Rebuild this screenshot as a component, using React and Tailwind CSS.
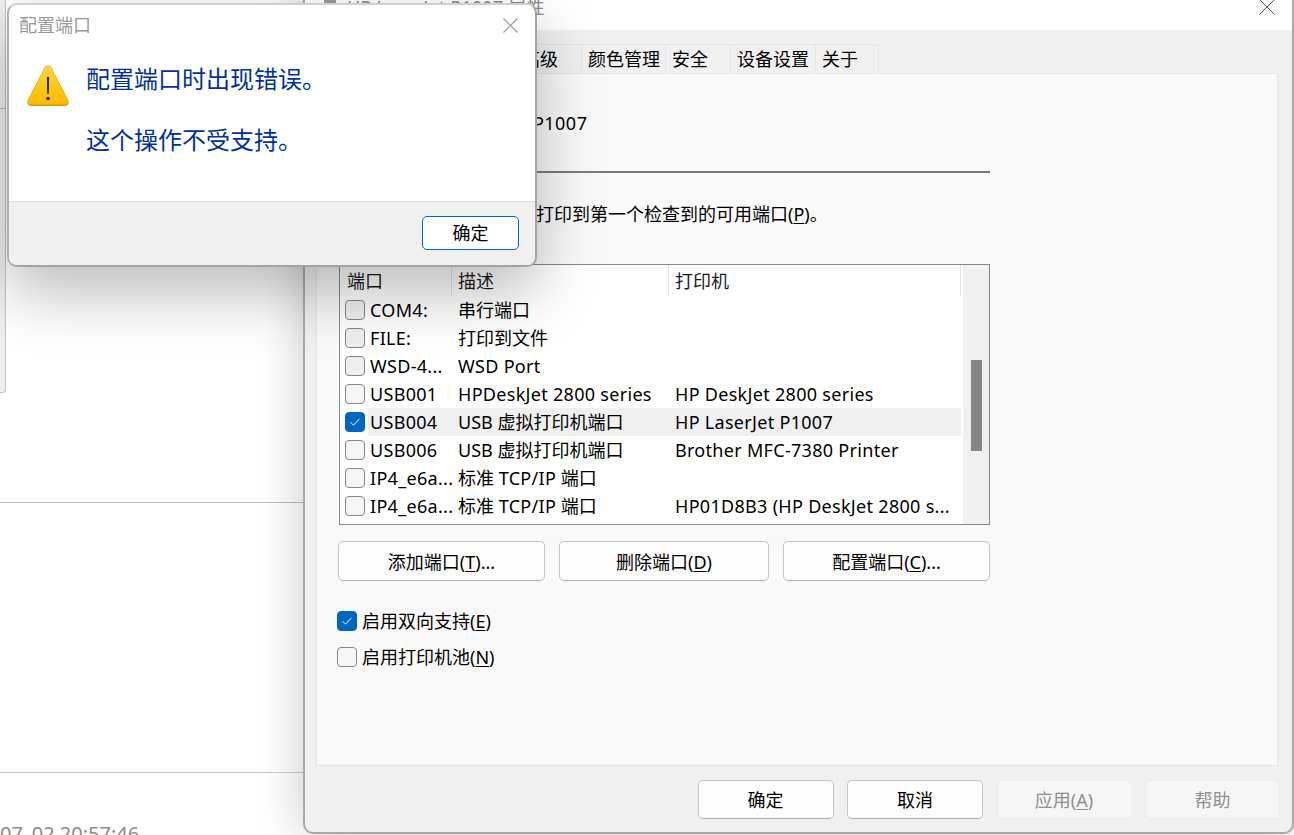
import React from "react";

const font = "font-['Noto_Sans','Noto_Sans_CJK_SC',sans-serif]";

function Check({ checked, dim, className = "" }) {
  return (
    <span
      className={
        "flex h-5 w-5 shrink-0 items-center justify-center rounded-[4px] border " +
        (checked
          ? "border-[#0067c0] bg-[#0067c0] "
          : dim
          ? "border-[#868686] bg-[#efefef] "
          : "border-[#868686] bg-[#f6f6f6] ") +
        className
      }
    >
      {checked && (
        <svg width="12" height="10" viewBox="0 0 12 10" fill="none">
          <path d="M1.5 5.2 4.5 8.2 10.5 1.8" stroke="#ffffff" strokeWidth="1" />
        </svg>
      )}
    </span>
  );
}

function Btn({ children, w, disabled, primary }) {
  return (
    <button
      className={
        "flex h-full items-center justify-center rounded-[5px] border text-[18px] " +
        w +
        " " +
        (disabled
          ? "border-[#ececec] bg-[#f6f6f6] pt-[2px] text-[#8f8f8f]"
          : primary
          ? "border-[#0067c0] bg-white text-black"
          : "border-[#c4c4c4] border-b-[#b0b0b0] bg-[#fdfdfd] pt-[2px] text-black")
      }
    >
      {children}
    </button>
  );
}

function U({ children }) {
  return <span className="underline underline-offset-2">{children}</span>;
}

function L({ children }) {
  return <span className="tracking-[0.3px]">{children}</span>;
}

const rows = [
  ["COM4:", "串行端口", "", false, true],
  ["FILE:", "打印到文件", "", false, true],
  ["WSD-4...", <L key="a">WSD Port</L>, "", false, true],
  ["USB001", <L key="b">HPDeskJet 2800 series</L>, "HP DeskJet 2800 series"],
  ["USB004", "USB 虚拟打印机端口", "HP LaserJet P1007", true],
  ["USB006", "USB 虚拟打印机端口", "Brother MFC-7380 Printer"],
  ["IP4_e6a...", <>标准 <L>TCP/IP</L> 端口</>, ""],
  ["IP4_e6a...", <>标准 <L>TCP/IP</L> 端口</>, "HP01D8B3 (HP DeskJet 2800 s..."],
];

const tabs = [
  ["常规", "w-[66px]"],
  ["共享", "w-[66px]"],
  ["端口", "w-[68px]"],
  ["高级", "w-[66px]"],
  ["颜色管理", "w-[84px]"],
  ["安全", "w-[65px]"],
  ["设备设置", "w-[85px]"],
  ["关于", "w-[63px]"],
];

function PortList() {
  return (
    <div className="flex h-[261px] w-[651px] border border-[#828790] bg-white">
      <div className="min-w-0 flex-1">
        <div className="flex h-[31px] text-[18px] leading-[32px] text-[#1a1a1a]">
          <div className="w-[112px] border-r border-[#e5e5e5] pl-[7px]">端口</div>
          <div className="w-[217px] border-r border-[#e5e5e5] pl-[6px]">描述</div>
          <div className="w-[292px] border-r border-[#e5e5e5] pl-[6px]">打印机</div>
        </div>
        {rows.map((r, i) => (
          <div key={i} className="flex h-7 items-center pl-[5px] text-[18px] text-black">
            <Check checked={r[3] === true} dim={r[4]} />
            <div
              className={
                "ml-[3px] mr-[2px] flex h-7 flex-1 items-center whitespace-nowrap pl-[2px] " +
                (r[3] === true ? "bg-[#f0f0f0]" : "")
              }
            >
              <span className="w-[88px] overflow-hidden tracking-[0.3px]">{r[0]}</span>
              <span className="w-[217px]">{r[1]}</span>
              <span className="tracking-[0.3px]">{r[2]}</span>
            </div>
          </div>
        ))}
      </div>
      <div className="flex w-[26px] justify-center bg-[#f0f0f0] pt-[95px]">
        <div className="h-[91px] w-[11px] bg-[#868686]" />
      </div>
    </div>
  );
}

function PrinterWindow() {
  return (
    <div className="absolute left-[303px] top-[-15px] flex h-[849px] w-[991px] flex-col overflow-hidden rounded-[10px] border-2 border-[#a9a9a9] bg-[#f0f0f0]">
      <div className="flex h-[43px] shrink-0 items-center bg-white pb-[3px] pl-[14px] pr-[17px]">
        <svg width="22" height="22" viewBox="0 0 22 22" className="mt-[-2px]">
          <rect x="1" y="8" width="20" height="10" fill="#777" />
          <rect x="5" y="2" width="12" height="7" fill="#999" />
        </svg>
        <span className="ml-[6px] whitespace-nowrap text-[18px] tracking-[0.2px] text-[#8a8a8a]">HP LaserJet P1007 属性</span>
        <svg width="16" height="16" viewBox="0 0 16 16" className="ml-auto" fill="none">
          <path d="M.5.5 15.500 15.500M15.500.5.5 15.500" stroke="#555" strokeWidth="1" />
        </svg>
      </div>
      <div className="flex min-h-0 flex-1 flex-col pl-[11px] pr-[14px] pt-[14px]">
        <div className="flex h-[29px] shrink-0">
          {tabs.map(([t, w]) => (
            <div
              key={t}
              className={
                "h-[29px] border-r border-t border-[#e5e5e5] pl-[6px] text-[18px] leading-[29px] text-black " + w
              }
            >
              {t}
            </div>
          ))}
        </div>
        <div className="h-[693px] shrink-0 border border-[#e5e5e5] bg-[#f9f9f9] pl-[21px] text-[18px] text-black">
          <div className="pl-[88px] pt-[36px] leading-[26px] tracking-[0.5px]">HP LaserJet P1007</div>
          <div className="mt-[35px] h-[2px] w-[652px] bg-[#7a7a7a]" />
          <div className="whitespace-nowrap pt-[28px] leading-[26px]">
            打印到下列端口。文档将打印到第一个检查到的可用端口(<U>P</U>)。
          </div>
          <div className="pl-px pt-[37px]">
            <PortList />
          </div>
          <div className="mt-[16px] flex h-[40px] gap-[14px]">
            <Btn w="w-[207px]">添加端口(<U>T</U>)...</Btn>
            <Btn w="w-[210px]">删除端口(<U>D</U>)</Btn>
            <Btn w="w-[207px]">配置端口(<U>C</U>)...</Btn>
          </div>
          <div className="-ml-px mt-[30px] flex h-5 items-center gap-[5px]">
            <Check checked />
            <span>启用双向支持(<U>E</U>)</span>
          </div>
          <div className="-ml-px mt-4 flex h-5 items-center gap-[5px]">
            <Check />
            <span>启用打印机池(<U>N</U>)</span>
          </div>
        </div>
        <div className="mr-[-2px] mt-[14px] flex h-[39px] shrink-0 justify-end gap-[13.5px]">
          <Btn w="w-[136px]">确定</Btn>
          <Btn w="w-[136px]">取消</Btn>
          <Btn w="w-[135px]" disabled>应用(<U>A</U>)</Btn>
          <Btn w="w-[135px]" disabled>帮助</Btn>
        </div>
      </div>
    </div>
  );
}

function WarningIcon() {
  return (
    <svg width="44" height="43" viewBox="0 0 44 43" className="shrink-0">
      <defs>
        <linearGradient id="warnFill" x1="0" y1="0" x2="0" y2="1">
          <stop offset="0" stopColor="#ffd83a" />
          <stop offset="1" stopColor="#fdb900" />
        </linearGradient>
      </defs>
      <path
        d="M22 1.5c-1.6 0-2.8 1-3.6 2.5L2 35.5C.5 38.6 1.8 42 5 42h34c3.2 0 4.5-3.4 3-6.5L25.6 4C24.8 2.5 23.6 1.500 22 1.500Z"
        fill="#e09a00"
      />
      <path
        d="M22 2c-1.400 0-2.400 1-3.100 2.300L2.600 35.500C1.500 37.900 2.500 40.500 5 40.500h34c2.500 0 3.500-2.600 2.400-5L25.100 4.300C24.400 3 23.400 2 22 2Z"
        fill="url(#warnFill)"
      />
      <path d="M20.900 13h2.200l-.3 17h-1.600Z" fill="#2a2a2a" />
      <circle cx="22" cy="34.500" r="1.800" fill="#2a2a2a" />
    </svg>
  );
}

function ErrorDialog() {
  return (
    <div className="absolute left-[7px] top-[3px] flex h-[264px] w-[530px] flex-col overflow-hidden rounded-[10px] border-2 border-b-[#a3a3a3] border-l-[#b0b0b0] border-r-[#a3a3a3] border-t-[#d0d0d0] bg-white shadow-[0_24px_64px_rgba(0,0,0,0.28)]">
      <div className="flex h-[40px] shrink-0 items-center justify-between pl-[10px] pr-[17px]">
        <span className="text-[18px] text-[#9a9a9a]">配置端口</span>
        <svg width="15" height="15" viewBox="0 0 15 15" fill="none">
          <path d="M.5.5 14.500 14.500M14.500.5.5 14.500" stroke="#9a9a9a" strokeWidth="1.200" />
        </svg>
      </div>
      <div className="flex flex-1 pl-[17px]">
        <div className="pt-[19px]">
          <WarningIcon />
        </div>
        <div className="pl-[16px] pt-[17px] text-[24px] text-[#003399]">
          <div className="leading-[34px]">配置端口时出现错误。</div>
          <div className="mt-[27px] leading-[34px]">这个操作不受支持。</div>
        </div>
      </div>
      <div className="flex h-[64px] shrink-0 items-start justify-end border-t border-[#dfdfdf] bg-[#f0f0f0] pr-[16px] pt-[14px]">
        <div className="h-[34px]">
          <Btn w="w-[97px]" primary>确定</Btn>
        </div>
      </div>
    </div>
  );
}

export default function App() {
  return (
    <div className={"relative h-[835px] w-[1294px] overflow-hidden bg-white " + font}>
      <div className="flex w-[304px] flex-col">
        <div className="h-[503px] border-b border-[#bdbdbd]" />
        <div className="h-[270px] border-b border-[#c8c8c8]" />
        <div className="whitespace-nowrap pt-[49px] text-[20px] leading-[24px] text-[#8c8c8c]">07_02 20:57:46</div>
      </div>
      <div className="absolute left-0 top-0 h-[393px] w-[6px] rounded-br-[4px] border-b border-r border-[#c4c4c4] bg-[#efefef]" />
      <div className="absolute left-0 top-[108px] h-px w-[6px] bg-[#b5b5b5]" />
      <div className="absolute left-[303px] top-[-15px] h-[849px] w-[991px] rounded-[10px] shadow-[0_0_48px_rgba(0,0,0,0.22)]" />
      <PrinterWindow />
      <ErrorDialog />
    </div>
  );
}
